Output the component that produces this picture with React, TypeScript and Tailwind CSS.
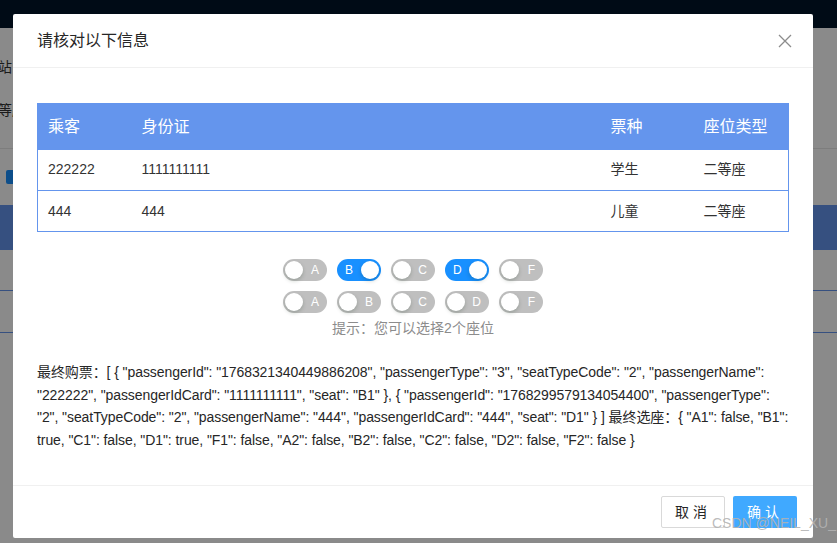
import React from "react";

const font = "font-['Liberation_Sans','Noto_Sans_CJK_SC',sans-serif]";

const passengers = [
  { name: "222222", idCard: "1111111111", type: "学生", seat: "二等座" },
  { name: "444", idCard: "444", type: "儿童", seat: "二等座" },
];

const rows = [
  { A: false, B: true, C: false, D: true, F: false },
  { A: false, B: false, C: false, D: false, F: false },
];

// final order + seat map, wrapped as in the original dialog
const summaryLines = [
  '最终购票：[ { "passengerId": "1768321340449886208", "passengerType": "3", "seatTypeCode": "2", "passengerName":',
  '"222222", "passengerIdCard": "1111111111", "seat": "B1" }, { "passengerId": "1768299579134054400", "passengerType":',
  '"2", "seatTypeCode": "2", "passengerName": "444", "passengerIdCard": "444", "seat": "D1" } ] 最终选座：{ "A1": false, "B1":',
  'true, "C1": false, "D1": true, "F1": false, "A2": false, "B2": false, "C2": false, "D2": false, "F2": false }',
];

function Seat({ label, on }: { label: string; on: boolean }) {
  return (
    <div
      className={
        "relative flex h-[22px] w-[44px] items-center rounded-full text-[12px] text-white " +
        (on ? "bg-[#1890ff] justify-start pl-[8px]" : "bg-[#bfbfbf] justify-end pr-[8px]")
      }
    >
      <span
        className={
          "absolute top-[2px] h-[18px] w-[18px] rounded-full bg-white shadow-[0_2px_4px_rgba(0,35,11,0.2)] " +
          (on ? "left-[24px]" : "left-[2px]")
        }
      />
      {label}
    </div>
  );
}

export default function App() {
  return (
    <div className={"relative h-[543px] w-[837px] overflow-hidden bg-white " + font}>
      {/* page underneath */}
      <div className="h-[28px] bg-[#001529]" />
      <div className="flex flex-col text-[14px] text-[#333]">
        <div className="flex h-[120px] flex-col gap-[22px] pt-[29px]">
          <span className="-ml-[2px]">站 <span className="text-[#8b4513]">(</span></span>
          <span className="-ml-[2px]">等座</span>
        </div>
        <div className="h-px bg-[#e8e8e8]" />
        <div className="flex h-[56px] items-center pl-[6px]">
          <span className="h-[14px] w-[14px] rounded-[2px] bg-[#1890ff]" />
        </div>
        <div className="h-[45px] bg-[#6495ed]" />
        <div className="h-[40px]" />
        <div className="h-px bg-[#6495ed]" />
        <div className="h-[41px]" />
        <div className="h-px bg-[#6495ed]" />
      </div>

      {/* mask */}
      <div className="absolute inset-0 bg-black/[0.46]" />

      {/* modal */}
      <div className="absolute left-[13px] top-[14px] flex w-[800px] flex-col rounded-[2px] bg-white">
        <div className="flex h-[54px] items-center justify-between border-b border-[#f0f0f0] px-[24px]">
          <span className="text-[16px] text-[#262626]">请核对以下信息</span>
          <svg width="14" height="14" viewBox="0 0 14 14" className="mr-[-3px]">
            <path d="M1 1 L13 13 M13 1 L1 13" stroke="#8c8c8c" strokeWidth="1.3" />
          </svg>
        </div>

        <div className="px-[24px] pt-[35px]">
          <table className="w-[752px] border-collapse border border-[#6495ed] text-[14px]">
            <thead>
              <tr className="h-[46px] bg-[#6495ed] text-left text-[16px] text-white">
                <th className="w-[94px] pl-[10px] font-normal">乘客</th>
                <th className="w-[469px] pl-[10px] font-normal">身份证</th>
                <th className="w-[93px] pl-[10px] font-normal">票种</th>
                <th className="pl-[10px] font-normal">座位类型</th>
              </tr>
            </thead>
            <tbody className="text-[#333]">
              {passengers.map((p) => (
                <tr key={p.name} className="h-[41px] border-b border-[#6495ed]">
                  <td className="pl-[10px]">{p.name}</td>
                  <td className="pl-[10px]">{p.idCard}</td>
                  <td className="pl-[10px]">{p.type}</td>
                  <td className="pl-[10px]">{p.seat}</td>
                </tr>
              ))}
            </tbody>
          </table>

          <div className="mt-[27px] flex flex-col items-center gap-[10px]">
            {rows.map((r, i) => (
              <div key={i} className="flex gap-[10px]">
                {Object.entries(r).map(([k, v]) => (
                  <Seat key={k} label={k} on={v} />
                ))}
              </div>
            ))}
          </div>
          <div className="mt-[4px] text-center text-[14px] leading-[22px] text-[#8c8c8c]">
            提示：您可以选择2个座位
          </div>

          <p className="mt-[22px] pb-[34px] text-[14px] leading-[22.5px] tracking-[-0.08px] text-[#262626]">
            {summaryLines.map((l, i) => (
              <span key={i} className="block whitespace-nowrap">
                {l}
              </span>
            ))}
          </p>
        </div>

        <div className="flex justify-end gap-[8px] border-t border-[#f0f0f0] px-[16px] py-[10px]">
          <button className="h-[32px] w-[64px] rounded-[2px] border border-[#d9d9d9] bg-white text-[14px] tracking-[4px] text-[#262626]">
            取消
          </button>
          <button className="h-[32px] w-[64px] rounded-[2px] bg-[#40a9ff] text-[14px] tracking-[4px] text-white">
            确认
          </button>
        </div>
      </div>

      {/* watermark */}
      <span className="absolute left-[712px] top-[513px] text-[14px] text-[#b3b3b3]/90">CSDN @NEIL_XU_</span>
    </div>
  );
}
